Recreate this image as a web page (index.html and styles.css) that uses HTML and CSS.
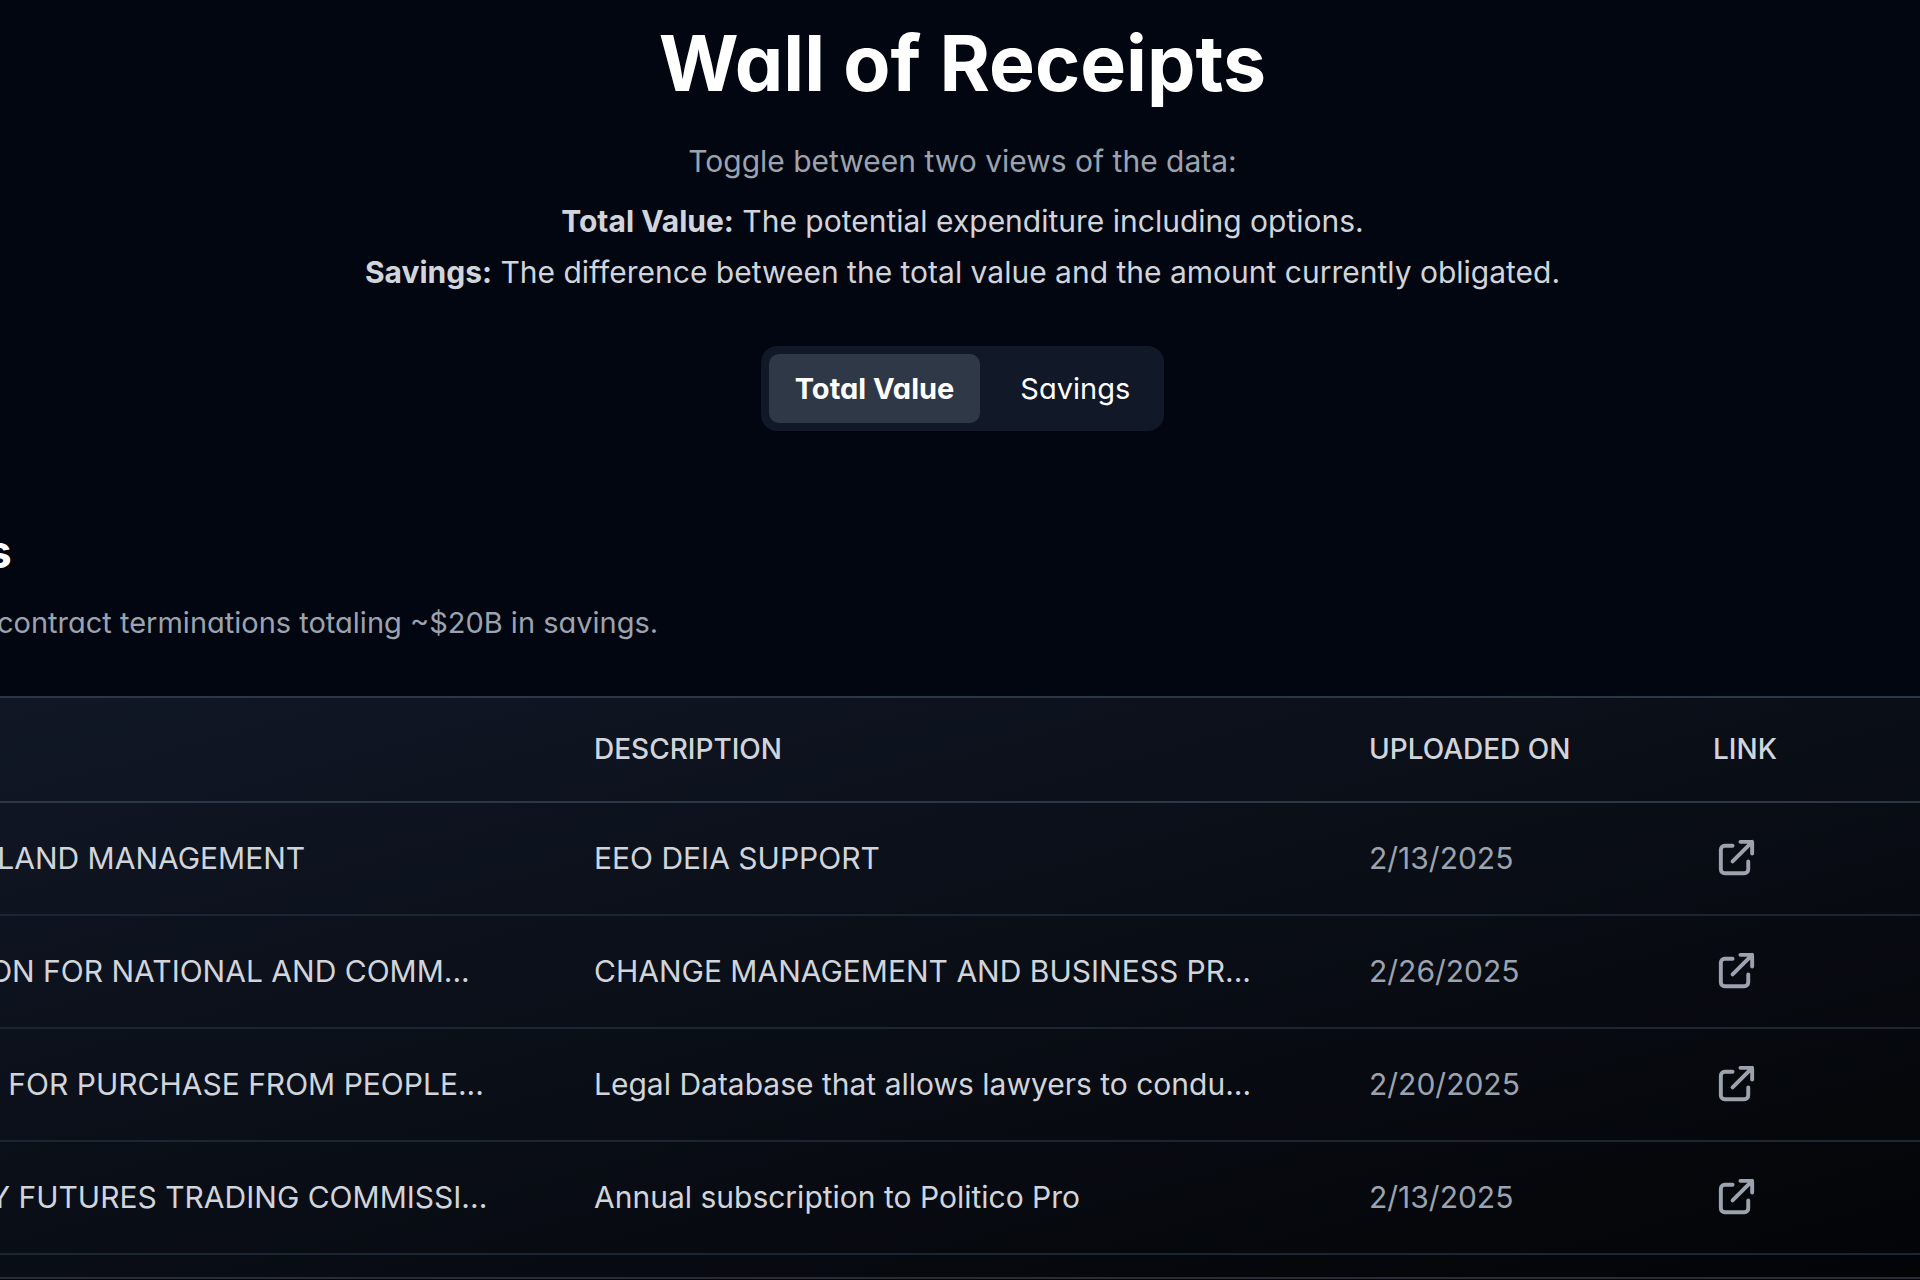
FILE: index.html
```html
<!DOCTYPE html>
<html lang="en">
<head>
    <meta charset="UTF-8">
    <meta name="viewport" content="width=device-width, initial-scale=1.0">
    <title>Wall of Receipts</title>
    <link rel="stylesheet" href="styles.css">
</head>
<body>
    <header class="hero">
        <h1>Wall of Receipts</h1>
        <p class="hint">Toggle between two views of the data:</p>
        <p class="definition"><strong>Total Value:</strong> The potential expenditure including options.</p>
        <p class="definition"><strong>Savings:</strong> The difference between the total value and the amount currently obligated.</p>
        <div class="toggle">
            <button type="button" class="active">Total Value</button>
            <button type="button">Savings</button>
        </div>
    </header>

    <section class="contracts">
        <h2>s</h2>
        <p class="summary">contract terminations totaling ~$20B in savings.</p>

        <div class="table-box">
            <table>
                <thead>
                    <tr>
                        <th class="col-agency"></th>
                        <th class="col-description">DESCRIPTION</th>
                        <th class="col-date">UPLOADED ON</th>
                        <th>LINK</th>
                    </tr>
                </thead>
                <tbody>
                    <tr>
                        <td>BUREAU OF LAND MANAGEMENT</td>
                        <td>EEO DEIA SUPPORT</td>
                        <td class="date">2/13/2025</td>
                        <td><a href="#" aria-label="Open contract"><svg viewBox="0 0 24 24"><path d="M10 6H6a2 2 0 0 0-2 2v10a2 2 0 0 0 2 2h10a2 2 0 0 0 2-2v-4M14 4h6m0 0v6m0-6L10 14"/></svg></a></td>
                    </tr>
                    <tr>
                        <td>CORPORATION FOR NATIONAL AND COMM...</td>
                        <td>CHANGE MANAGEMENT AND BUSINESS PR...</td>
                        <td class="date">2/26/2025</td>
                        <td><a href="#" aria-label="Open contract"><svg viewBox="0 0 24 24"><path d="M10 6H6a2 2 0 0 0-2 2v10a2 2 0 0 0 2 2h10a2 2 0 0 0 2-2v-4M14 4h6m0 0v6m0-6L10 14"/></svg></a></td>
                    </tr>
                    <tr>
                        <td>COMMITTEE FOR PURCHASE FROM PEOPLE...</td>
                        <td>Legal Database that allows lawyers to condu...</td>
                        <td class="date">2/20/2025</td>
                        <td><a href="#" aria-label="Open contract"><svg viewBox="0 0 24 24"><path d="M10 6H6a2 2 0 0 0-2 2v10a2 2 0 0 0 2 2h10a2 2 0 0 0 2-2v-4M14 4h6m0 0v6m0-6L10 14"/></svg></a></td>
                    </tr>
                    <tr>
                        <td>COMMODITY FUTURES TRADING COMMISSI...</td>
                        <td>Annual subscription to Politico Pro</td>
                        <td class="date">2/13/2025</td>
                        <td><a href="#" aria-label="Open contract"><svg viewBox="0 0 24 24"><path d="M10 6H6a2 2 0 0 0-2 2v10a2 2 0 0 0 2 2h10a2 2 0 0 0 2-2v-4M14 4h6m0 0v6m0-6L10 14"/></svg></a></td>
                    </tr>
                </tbody>
            </table>
        </div>
    </section>
</body>
</html>
```

FILE: styles.css
```css
* {
    box-sizing: border-box;
}

body {
    background-color: #020611;
    color: #d1d5db;
    font-family: Inter, sans-serif;
    font-size: 30px;
    line-height: 40px;
    margin: 0;
    overflow-x: hidden;
}

h1, h2, p {
    margin: 0;
}

.hero {
    display: flex;
    flex-direction: column;
    align-items: center;
    padding: 15px 0 0 5px;
    text-align: center;
}

h1 {
    color: white;
    font-size: 77px;
    line-height: 96px;
    margin-bottom: 30px;
    font-feature-settings: "cv11";
}

.hint {
    color: #9ca3af;
    margin-bottom: 20px;
}

.definition {
    margin-bottom: 11px;
}

.toggle {
    display: flex;
    gap: 14px;
    background-color: #111827;
    border-radius: 16px;
    padding: 8px;
    margin-top: 43px;
}

.toggle button {
    background: none;
    border: none;
    border-radius: 10px;
    color: white;
    cursor: pointer;
    font: inherit;
    font-size: 29px;
    font-feature-settings: "cv11";
    height: 69px;
    padding: 0 26px;
}

.toggle .active {
    background-color: #2f3847;
    font-weight: 700;
}

.contracts {
    margin-top: 92px;
}

h2 {
    color: white;
    font-size: 46px;
    line-height: 56px;
    margin-left: -14px;
}

.summary {
    color: #9ca3af;
    font-size: 29px;
    font-feature-settings: "cv11";
    margin: 24px 0 53px -3px;
}

/* the agency column runs off the left edge */
.table-box {
    margin-left: -182px;
    background: linear-gradient(to bottom right, #111827, #000000 120%);
    border-top: 2px solid #2c3746;
    border-bottom: 2px solid #2b2b35;
    padding-bottom: 22px;
}

table {
    border-collapse: collapse;
    table-layout: fixed;
    width: 100%;
}

th, td {
    padding: 0 0 2px;
    text-align: left;
    white-space: nowrap;
}

th {
    border-bottom: 2px solid #2c3746;
    font-size: 28px;
    font-weight: 500;
    height: 104px;
}

td {
    border-bottom: 2px solid #1c2633;
    height: 113px;
}

.col-agency {
    width: 776px;
}

.col-description {
    width: 775px;
}

.col-date {
    width: 344px;
}

.date {
    color: #9ca3af;
}

td a {
    color: #9ca3af;
    display: block;
    width: 47px;
    height: 47px;
}

svg {
    display: block;
    fill: none;
    stroke: currentColor;
    stroke-width: 2;
    stroke-linecap: round;
    stroke-linejoin: round;
}
```
